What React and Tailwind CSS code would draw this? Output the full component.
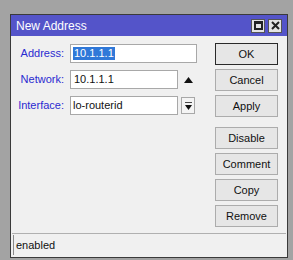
export default function App() {
  const font = { fontFamily: '"Liberation Sans", Arial, sans-serif' };

  // Botón de la columna derecha
  const Btn = ({ children, main = false }) => (
    <button
      className={`w-[63px] h-[22px] bg-[#e6e6e6] text-[11px] text-[#111] flex items-center justify-center ${
        main ? 'border border-[#2a2a2a]' : 'border border-[#acacac]'
      }`}
    >
      {children}
    </button>
  );

  const Label = ({ children }) => (
    <div className="w-[54px] text-right text-[11px] text-[#2a2ad0] pr-[1px]">{children}</div>
  );

  return (
    <div className="w-[293px] h-[260px] bg-[#a3a3a3] pt-[14px] pl-[10px]" style={font}>
      <div className="w-[278px] h-[244px] border border-[#3a3a3a] bg-[#f0f0f0] flex flex-col">
        {/* Title bar */}
        <div className="h-[21px] bg-[#5454c9] flex items-center pl-[5px] pr-[5px]">
          <span className="text-white text-[12px] flex-1">New Address</span>
          <div className="flex gap-[3px]">
            <div className="w-[14px] h-[14px] bg-[#e4e4e4] border border-[#555] flex items-center justify-center">
              <div className="w-[9px] h-[9px] border-[2px] border-t-[3px] border-[#222]"></div>
            </div>
            <div className="w-[14px] h-[14px] bg-[#e4e4e4] border border-[#555] flex items-center justify-center">
              <svg width="9" height="9" viewBox="0 0 9 9">
                <path d="M1 1L8 8M8 1L1 8" stroke="#222" strokeWidth="2" />
              </svg>
            </div>
          </div>
        </div>

        {/* Body */}
        <div className="flex flex-1 pt-[7px]">
          <div className="flex flex-col gap-[7px] pt-[1px]">
            <div className="flex items-center h-[19px]">
              <Label>Address:</Label>
              <div className="ml-[5px] w-[127px] h-[19px] bg-white border border-[#a8a8a8] flex items-center pl-[2px]">
                <span className="bg-[#3078d8] text-white text-[11px] leading-[13px] px-[1px]">10.1.1.1</span>
              </div>
            </div>
            <div className="flex items-center h-[19px]">
              <Label>Network:</Label>
              <div className="ml-[5px] w-[108px] h-[19px] bg-white border border-[#a8a8a8] flex items-center pl-[3px] text-[11px] text-[#111]">
                10.1.1.1
              </div>
              <svg className="ml-[6px]" width="9" height="6" viewBox="0 0 9 6">
                <path d="M0 6L4.5 0L9 6Z" fill="#111" />
              </svg>
            </div>
            <div className="flex items-center h-[19px]">
              <Label>Interface:</Label>
              <div className="ml-[5px] w-[108px] h-[19px] bg-white border border-[#a8a8a8] flex items-center pl-[2px] text-[11px] text-[#111]">
                lo-routerid
              </div>
              <div className="ml-[3px] w-[14px] h-[17px] bg-[#f4f4f4] border border-[#a8a8a8] flex items-center justify-center">
                <svg width="7" height="8" viewBox="0 0 7 8">
                  <path d="M0 0H7" stroke="#111" strokeWidth="1.5" />
                  <path d="M0 3H7L3.5 8Z" fill="#111" />
                </svg>
              </div>
            </div>
          </div>

          <div className="ml-auto mr-[9px] flex flex-col">
            <div className="flex flex-col gap-[4px]">
              <Btn main>OK</Btn>
              <Btn>Cancel</Btn>
              <Btn>Apply</Btn>
            </div>
            <div className="flex flex-col gap-[4px] mt-[10px]">
              <Btn>Disable</Btn>
              <Btn>Comment</Btn>
              <Btn>Copy</Btn>
              <Btn>Remove</Btn>
            </div>
          </div>
        </div>

        {/* Status bar */}
        <div className="border-t border-[#b0b0b0] mx-[1px] pt-[1px] pb-[2px]">
          <div className="h-[20px] mx-[1px] border-l border-[#8a8a8a] flex items-center pl-[2px] text-[11px] text-[#111]">
            enabled
          </div>
        </div>
      </div>
    </div>
  );
}
